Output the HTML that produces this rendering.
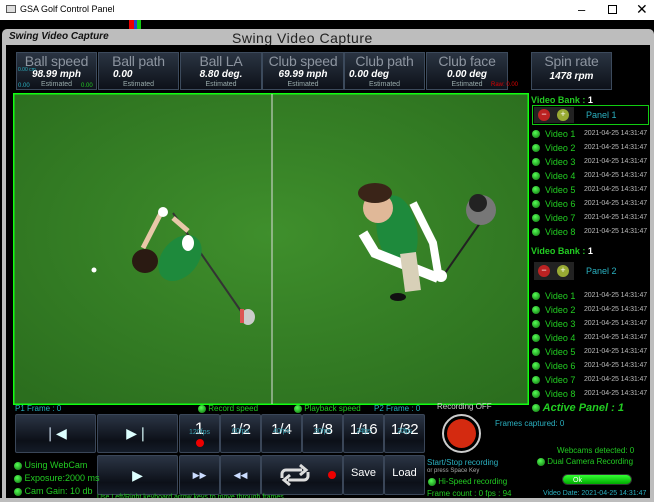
<!DOCTYPE html>
<html><head><meta charset="utf-8"><style>
*{box-sizing:border-box;margin:0;padding:0;white-space:nowrap}
body{width:654px;height:502px;overflow:hidden;background:#000;font-family:"Liberation Sans",sans-serif;position:relative}
.a{position:absolute}
.tb{left:0;top:0;width:654px;height:20px;background:#fff;font-size:9px;color:#000}
.frame{left:2px;top:29px;width:652px;height:473px;background:#bdbdbd;border-radius:5px 5px 0 0}
.inner{left:6px;top:45px;width:644px;height:453px;background:#000}
.stat{top:52px;height:38px;background:linear-gradient(#2a3442,#0d1119);border:1px solid #3c4a5c;text-align:center;overflow:hidden}
.stat .t{font-size:14px;color:#8d95a0;line-height:16px;letter-spacing:-.2px}
.stat .v{font-size:10px;color:#fff;font-style:italic;font-weight:bold;line-height:12px}
.stat .e{font-size:7px;color:#9aa;line-height:8px}
.btn{background:linear-gradient(#2b3545,#0c1018 70%,#141c28);border:1px solid #3a4658;border-radius:2px;color:#fff;text-align:center}
.btn .f{font-size:7px;color:#3a9fb0;position:absolute;bottom:5px;width:100%}
.g{color:#22cc22;font-size:9px}
.led{display:inline-block;width:8px;height:8px;border-radius:50%;background:radial-gradient(circle at 40% 35%,#5f5,#0a6a0a);vertical-align:middle}
.vrow{left:532px;font-size:9px;height:14px;line-height:14px;width:122px}
.vrow .n{color:#22cc22;position:absolute;left:13px}
.vrow .d{color:#bbb;position:absolute;left:52px;font-size:7px;letter-spacing:-.1px}
.c{color:#2ab0c0}
</style></head><body>
<div class="a tb"><span class="a" style="left:6px;top:5px;width:10px;height:8px;border:1px solid #555;background:#ddd"></span><span class="a" style="left:20px;top:4px">GSA Golf Control Panel</span>
<span class="a" style="left:578px;top:2px;font-size:13px">–</span><span class="a" style="left:608px;top:5px;width:9px;height:9px;border:1px solid #000"></span><span class="a" style="left:636px;top:1px;font-size:14px">✕</span></div>
<div class="a" style="left:129px;top:20px;width:5px;height:9px;background:#e00"></div><div class="a" style="left:134px;top:20px;width:3px;height:9px;background:#24c"></div><div class="a" style="left:137px;top:20px;width:4px;height:9px;background:#1c1"></div>
<div class="a frame"></div>
<div class="a" style="left:9px;top:31px;font-size:10px;font-style:italic;font-weight:bold;color:#111">Swing Video Capture</div>
<div class="a" style="left:232px;top:30px;font-size:14px;color:#222;letter-spacing:.5px">Swing Video Capture</div>
<div class="a inner"></div>

<div class="a stat" style="left:16px;width:81px"><div class="t">Ball speed</div><div class="v">98.99 mph</div><div class="e">Estimated</div><span class="a c" style="left:1px;top:14px;font-size:5px">0.00 cm</span><span class="a c" style="left:1px;top:30px;font-size:6px">0.00</span><span class="a" style="left:64px;top:30px;font-size:6px;color:#2c2">0.00</span></div>
<div class="a stat" style="left:98px;width:81px"><div class="t">Ball path</div><div class="v" style="text-align:left;padding-left:14px">0.00</div><div class="e">Estimated</div></div>
<div class="a stat" style="left:180px;width:82px"><div class="t">Ball LA</div><div class="v">8.80 deg.</div><div class="e">Estimated</div></div>
<div class="a stat" style="left:262px;width:82px"><div class="t">Club speed</div><div class="v">69.99 mph</div><div class="e">Estimated</div></div>
<div class="a stat" style="left:344px;width:81px"><div class="t">Club path</div><div class="v" style="text-align:left;padding-left:4px">0.00 deg</div><div class="e">Estimated</div></div>
<div class="a stat" style="left:426px;width:82px"><div class="t">Club face</div><div class="v">0.00 deg</div><div class="e">Estimated</div></div>
<div class="a" style="left:491px;top:82px;font-size:6px;color:#d00">Raw: 0.00</div>
<div class="a stat" style="left:531px;width:81px"><div class="t">Spin rate</div><div class="v" style="margin-top:2px">1478 rpm</div></div>

<svg class="a" style="left:13px;top:93px" width="516" height="312" viewBox="0 0 516 312">
<defs><radialGradient id="gr" cx="50%" cy="45%" r="70%"><stop offset="0" stop-color="#3f8f2c"/><stop offset="1" stop-color="#2b6e1e"/></radialGradient></defs>
<rect width="516" height="312" fill="url(#gr)"/>
<rect x="0.5" y="0.5" width="515" height="311" fill="none" stroke="#1f1" stroke-width="2"/>
<line x1="259" y1="1" x2="259" y2="311" stroke="#ddd" stroke-width="1"/>
<circle cx="81" cy="177" r="2.5" fill="#fff"/>
<path d="M160 120 L232 224" stroke="#333" stroke-width="2"/>
<path d="M148 120 L130 155" stroke="#e8c8a8" stroke-width="5"/><path d="M160 125 L175 138" stroke="#e8c8a8" stroke-width="5"/>
<ellipse cx="167" cy="165" rx="18" ry="26" transform="rotate(40 167 165)" fill="#1e8a3c"/>
<ellipse cx="175" cy="150" rx="6" ry="8" fill="#fff"/>
<ellipse cx="132" cy="168" rx="13" ry="12" fill="#2a1a12"/>
<circle cx="150" cy="119" r="5" fill="#fff"/>
<ellipse cx="235" cy="224" rx="7" ry="8" fill="#ccc"/><rect x="227" y="216" width="4" height="14" fill="#d55"/>
<ellipse cx="384" cy="138" rx="20" ry="36" transform="rotate(-10 384 138)" fill="#1e8a3c"/>
<path d="M350 140 L362 160 L425 185" stroke="#fff" stroke-width="10" fill="none"/><path d="M400 110 L420 150 L425 180" stroke="#fff" stroke-width="8" fill="none"/>
<path d="M395 160 L400 198" stroke="#d8d0b8" stroke-width="16"/>
<ellipse cx="385" cy="204" rx="8" ry="4" fill="#111"/>
<circle cx="365" cy="115" r="15" fill="#e0b898"/><ellipse cx="362" cy="100" rx="17" ry="10" fill="#3a2418"/>
<path d="M430 183 L467 130" stroke="#222" stroke-width="2"/>
<circle cx="468" cy="117" r="15" fill="#777"/><circle cx="465" cy="110" r="9" fill="#222"/>
<circle cx="428" cy="183" r="6" fill="#fff"/>
</svg>

<div class="a" style="left:531px;top:95px;font-size:9px;color:#2c2;font-weight:bold">Video Bank : <span style="color:#fff">1</span></div>
<div class="a" style="left:532px;top:105px;width:117px;height:20px;border:1px solid #1c1"></div>
<div class="a" style="left:534px;top:107px;width:40px;height:16px;background:#222"></div>
<div class="a" style="left:538px;top:109px;width:12px;height:12px;border-radius:50%;background:#b22;color:#fff;font-size:9px;text-align:center;line-height:11px">−</div>
<div class="a" style="left:557px;top:109px;width:12px;height:12px;border-radius:50%;background:#9a3;color:#fff;font-size:9px;text-align:center;line-height:11px">+</div>
<div class="a c" style="left:586px;top:110px;font-size:9px">Panel 1</div>
<div class="a vrow" style="top:127px"><span class="led a" style="top:3px"></span><span class="n">Video 1</span><span class="d">2021-04-25 14:31:47</span></div>
<div class="a vrow" style="top:141px"><span class="led a" style="top:3px"></span><span class="n">Video 2</span><span class="d">2021-04-25 14:31:47</span></div>
<div class="a vrow" style="top:155px"><span class="led a" style="top:3px"></span><span class="n">Video 3</span><span class="d">2021-04-25 14:31:47</span></div>
<div class="a vrow" style="top:169px"><span class="led a" style="top:3px"></span><span class="n">Video 4</span><span class="d">2021-04-25 14:31:47</span></div>
<div class="a vrow" style="top:183px"><span class="led a" style="top:3px"></span><span class="n">Video 5</span><span class="d">2021-04-25 14:31:47</span></div>
<div class="a vrow" style="top:197px"><span class="led a" style="top:3px"></span><span class="n">Video 6</span><span class="d">2021-04-25 14:31:47</span></div>
<div class="a vrow" style="top:211px"><span class="led a" style="top:3px"></span><span class="n">Video 7</span><span class="d">2021-04-25 14:31:47</span></div>
<div class="a vrow" style="top:225px"><span class="led a" style="top:3px"></span><span class="n">Video 8</span><span class="d">2021-04-25 14:31:47</span></div>
<div class="a" style="left:531px;top:246px;font-size:9px;color:#2c2;font-weight:bold">Video Bank : <span style="color:#fff">1</span></div>
<div class="a" style="left:534px;top:262px;width:40px;height:18px;background:#222"></div>
<div class="a" style="left:538px;top:265px;width:12px;height:12px;border-radius:50%;background:#b22;color:#fff;font-size:9px;text-align:center;line-height:11px">−</div>
<div class="a" style="left:557px;top:265px;width:12px;height:12px;border-radius:50%;background:#9a3;color:#fff;font-size:9px;text-align:center;line-height:11px">+</div>
<div class="a c" style="left:586px;top:266px;font-size:9px">Panel 2</div>
<div class="a vrow" style="top:289px"><span class="led a" style="top:3px"></span><span class="n">Video 1</span><span class="d">2021-04-25 14:31:47</span></div>
<div class="a vrow" style="top:303px"><span class="led a" style="top:3px"></span><span class="n">Video 2</span><span class="d">2021-04-25 14:31:47</span></div>
<div class="a vrow" style="top:317px"><span class="led a" style="top:3px"></span><span class="n">Video 3</span><span class="d">2021-04-25 14:31:47</span></div>
<div class="a vrow" style="top:331px"><span class="led a" style="top:3px"></span><span class="n">Video 4</span><span class="d">2021-04-25 14:31:47</span></div>
<div class="a vrow" style="top:345px"><span class="led a" style="top:3px"></span><span class="n">Video 5</span><span class="d">2021-04-25 14:31:47</span></div>
<div class="a vrow" style="top:359px"><span class="led a" style="top:3px"></span><span class="n">Video 6</span><span class="d">2021-04-25 14:31:47</span></div>
<div class="a vrow" style="top:373px"><span class="led a" style="top:3px"></span><span class="n">Video 7</span><span class="d">2021-04-25 14:31:47</span></div>
<div class="a vrow" style="top:387px"><span class="led a" style="top:3px"></span><span class="n">Video 8</span><span class="d">2021-04-25 14:31:47</span></div>
<div class="a" style="left:532px;top:402px;font-size:11px;color:#2c2;font-weight:bold;font-style:italic"><span class="led"></span> Active Panel : 1</div>

<div class="a c" style="left:15px;top:404px;font-size:8px">P1 Frame : 0</div>
<div class="a g" style="left:198px;top:404px;font-size:8px"><span class="led"></span> Record speed</div>
<div class="a g" style="left:294px;top:404px;font-size:8px"><span class="led"></span> Playback speed</div>
<div class="a c" style="left:374px;top:404px;font-size:8px">P2 Frame : 0</div>

<div class="a btn" style="left:15px;top:414px;width:81px;height:39px;font-size:14px;line-height:37px;color:#cde">&#10072;<span style="color:#dff">◀</span></div>
<div class="a btn" style="left:97px;top:414px;width:81px;height:39px;font-size:14px;line-height:37px;color:#dff">▶&#10072;</div>
<div class="a btn" style="left:179px;top:414px;width:41px;height:39px;font-size:17px;line-height:28px">1<div class="f">120fps</div><span class="a" style="left:16px;top:24px;width:8px;height:8px;border-radius:50%;background:#e00"></span></div>
<div class="a btn" style="left:220px;top:414px;width:41px;height:39px;font-size:15px;line-height:30px">1/2<div class="f">60fps</div></div>
<div class="a btn" style="left:261px;top:414px;width:41px;height:39px;font-size:15px;line-height:30px">1/4<div class="f">40fps</div></div>
<div class="a btn" style="left:302px;top:414px;width:41px;height:39px;font-size:15px;line-height:30px">1/8<div class="f">30fps</div></div>
<div class="a btn" style="left:343px;top:414px;width:41px;height:39px;font-size:15px;line-height:30px;letter-spacing:-.5px">1/16<div class="f">24fps</div></div>
<div class="a btn" style="left:384px;top:414px;width:41px;height:39px;font-size:15px;line-height:30px;letter-spacing:-.5px">1/32<div class="f">20fps</div></div>

<div class="a btn" style="left:97px;top:455px;width:81px;height:40px;font-size:14px;line-height:38px;color:#dff">▶</div>
<div class="a btn" style="left:179px;top:455px;width:41px;height:40px;font-size:9px;line-height:38px;color:#cdf">▶▶</div>
<div class="a btn" style="left:220px;top:455px;width:41px;height:40px;font-size:9px;line-height:38px;color:#cdf">◀◀</div>
<div class="a btn" style="left:261px;top:455px;width:82px;height:40px"><svg width="80" height="38"><path d="M20 22 v-4 a4 4 0 0 1 4-4 h16 M38 9 l6 5 -6 5 M46 16 v4 a4 4 0 0 1-4 4 h-16 M28 19 l-6 5 6 5" stroke="#ddd" stroke-width="3" fill="none"/><circle cx="70" cy="19" r="4" fill="#e00"/></svg></div>
<div class="a btn" style="left:343px;top:455px;width:41px;height:40px;font-size:11px;line-height:34px">Save</div>
<div class="a btn" style="left:384px;top:455px;width:41px;height:40px;font-size:11px;line-height:34px">Load</div>

<div class="a g" style="left:14px;top:460px"><span class="led"></span> Using WebCam</div>
<div class="a g" style="left:14px;top:473px"><span class="led"></span> Exposure:2000 ms</div>
<div class="a g" style="left:14px;top:486px"><span class="led"></span> Cam Gain: 10 db</div>
<div class="a g" style="left:97px;top:494px;font-size:7px">Use Left/Right keyboard arrow keys to move through frames</div>

<div class="a" style="left:437px;top:402px;font-size:8px;color:#ccc">Recording OFF</div>
<div class="a" style="left:442px;top:414px;width:39px;height:39px;border-radius:50%;border:2px solid #ccc;background:#000"><div style="margin:3px;width:29px;height:29px;border-radius:50%;background:#d42a10"></div></div>
<div class="a c" style="left:495px;top:419px;font-size:8px">Frames captured: 0</div>
<div class="a g" style="left:557px;top:446px;font-size:8px">Webcams detected: 0</div>
<div class="a g" style="left:537px;top:457px;font-size:8px"><span class="led"></span> Dual Camera Recording</div>
<div class="a c" style="left:427px;top:458px;font-size:8px">Start/Stop recording</div>
<div class="a" style="left:427px;top:468px;font-size:6px;color:#aaa">or press Space Key</div>
<div class="a g" style="left:428px;top:477px;font-size:8px"><span class="led"></span> Hi-Speed recording</div>
<div class="a g" style="left:427px;top:489px;font-size:8px">Frame count : 0 fps : 94</div>
<div class="a" style="left:562px;top:474px;width:70px;height:11px;border-radius:6px;background:linear-gradient(#3f3,#0a0);font-size:7px;color:#fff;padding-left:10px;line-height:11px;border:1px solid #333">Ok</div>
<div class="a c" style="left:543px;top:490px;font-size:7px">Video Date: 2021-04-25 14:31:47</div>
<div class="a" style="left:0;top:498px;width:654px;height:4px;background:#bdbdbd"></div>
</body></html>
